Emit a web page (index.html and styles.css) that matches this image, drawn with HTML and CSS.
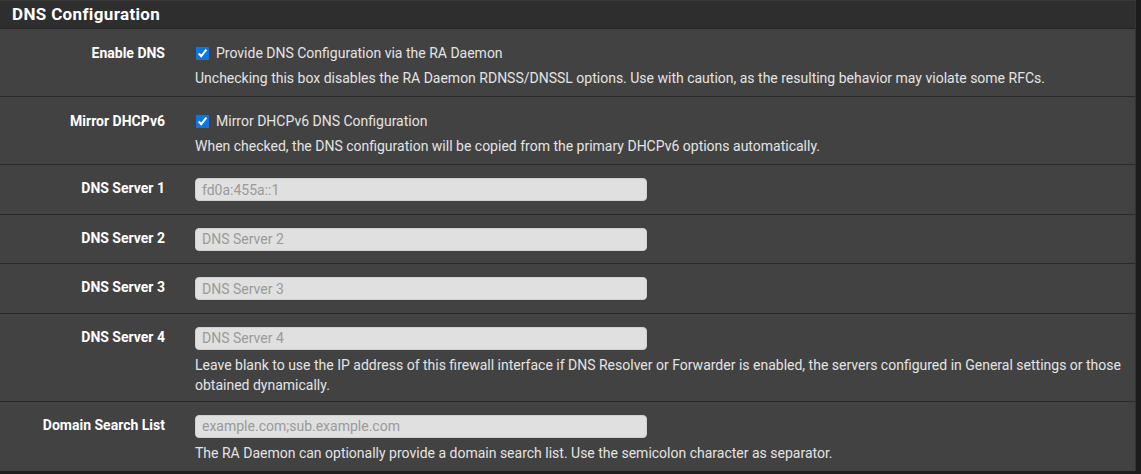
FILE: index.html
```html
<!DOCTYPE html>
<html>
<head>
<meta charset="utf-8">
<link rel="stylesheet" href="styles.css">
</head>
<body>
<div class="panel">
  <div class="panel-heading">DNS Configuration</div>
  <div class="panel-body">
    <div class="row">
      <div class="label">Enable DNS</div>
      <div class="field">
        <label class="check"><input type="checkbox" checked> Provide DNS Configuration via the RA Daemon</label>
        <div class="help">Unchecking this box disables the RA Daemon RDNSS/DNSSL options. Use with caution, as the resulting behavior may violate some RFCs.</div>
      </div>
    </div>
    <div class="row">
      <div class="label">Mirror DHCPv6</div>
      <div class="field">
        <label class="check"><input type="checkbox" checked> Mirror DHCPv6 DNS Configuration</label>
        <div class="help">When checked, the DNS configuration will be copied from the primary DHCPv6 options automatically.</div>
      </div>
    </div>
    <div class="row input-row">
      <div class="label">DNS Server 1</div>
      <div class="field"><input class="text" type="text" placeholder="fd0a:455a::1"></div>
    </div>
    <div class="row input-row">
      <div class="label">DNS Server 2</div>
      <div class="field"><input class="text" type="text" placeholder="DNS Server 2"></div>
    </div>
    <div class="row input-row">
      <div class="label">DNS Server 3</div>
      <div class="field"><input class="text" type="text" placeholder="DNS Server 3"></div>
    </div>
    <div class="row input-row with-help">
      <div class="label">DNS Server 4</div>
      <div class="field">
        <input class="text" type="text" placeholder="DNS Server 4">
        <div class="help">Leave blank to use the IP address of this firewall interface if DNS Resolver or Forwarder is enabled, the servers configured in General settings or those obtained dynamically.</div>
      </div>
    </div>
    <div class="row input-row with-help last">
      <div class="label">Domain Search List</div>
      <div class="field">
        <input class="text" type="text" placeholder="example.com;sub.example.com">
        <div class="help">The RA Daemon can optionally provide a domain search list. Use the semicolon character as separator.</div>
      </div>
    </div>
  </div>
</div>
</body>
</html>
```

FILE: styles.css
```css
html, body {
  margin: 0;
  padding: 0;
  background: #1c1c1c;
  font-family: Roboto, "Liberation Sans", sans-serif;
  font-size: 14px;
  color: #e4e4e4;
}
.panel {
  width: 1135px;
  border-right: 1px solid #333;
  background: #424242;
}
.panel-heading {
  box-sizing: border-box;
  height: 29px;
  line-height: 27px;
  background: #2e2e2e;
  border-top: 1px solid #3a3a3a;
  border-bottom: 1px solid #262626;
  padding-left: 12px;
  font-size: 17px;
  letter-spacing: 0.35px;
  font-weight: bold;
  color: #ffffff;
}
.row {
  display: flex;
  border-bottom: 1px solid #2a2a2a;
  padding: 14px 0 8px;
}
.row.last {
  border-bottom: none;
}
.label {
  width: 165px;
  text-align: right;
  font-weight: bold;
  color: #ffffff;
  line-height: 20px;
  flex: none;
}
.field {
  padding-left: 30px;
  padding-right: 10px;
  flex: 1;
}
.check {
  display: flex;
  align-items: center;
  line-height: 20px;
  height: 20px;
  gap: 7px;
}
.check input {
  margin: 0 0 0 1px;
  width: 13px;
  height: 13px;
  accent-color: #0a75e6;
}
.help {
  margin-top: 5px;
  line-height: 20px;
}
.input-row {
  padding: 13px 0 12.5px;
}
.input-row.with-help {
  padding-bottom: 6px;
}
.input-row.with-help.last {
  padding-bottom: 8px;
}
.text {
  display: block;
  box-sizing: border-box;
  width: 452px;
  height: 23px;
  margin: 0;
  border: 1px solid #cfcfcf;
  border-radius: 4px;
  background: #e0e0e0;
  padding: 0 6px;
  font-family: Roboto, "Liberation Sans", sans-serif;
  font-size: 14px;
  color: #333;
}
.text::placeholder {
  color: #9a9a9a;
}
```
